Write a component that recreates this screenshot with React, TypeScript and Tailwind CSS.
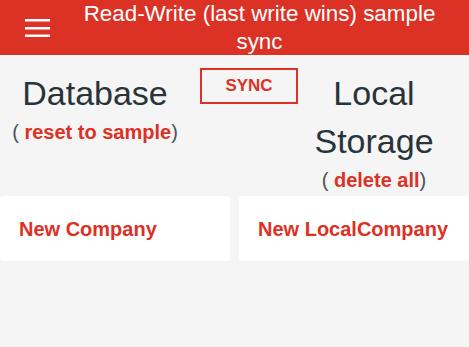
export default function App() {
  return (
    <div className="min-h-[347px] bg-[#f5f5f5] font-['Liberation_Sans',Arial,sans-serif]">
      <header className="h-[55px] bg-[#dc3125] flex items-center">
        <button className="ml-[25px] w-[25px] h-[18px] shrink-0" aria-label="menu">
          <svg width="25" height="18" viewBox="0 0 25 18" className="block">
            <rect x="0" y="0" width="25" height="2.5" fill="#fff" />
            <rect x="0" y="8" width="25" height="2.5" fill="#fff" />
            <rect x="0" y="15.5" width="25" height="2.5" fill="#fff" />
          </svg>
        </button>
        <h1 className="ml-[12px] w-[395px] text-center text-white text-[22.4px] leading-[28px]">
          Read-Write (last write wins) sample sync
        </h1>
      </header>

      <div className="flex items-start">
        <div className="w-[190px] pt-[14px] text-center">
          <div className="text-[34px] leading-[48px] text-[#29343a]">Database</div>
          <div className="text-[20px] leading-[30px] text-[#4a5358]">
            ({" "}
            <a className="font-bold text-[#dc3125]">reset to sample</a>)
          </div>
        </div>
        <button className="ml-[10px] mt-[13px] w-[98px] h-[36px] border-2 border-[#dc3125] text-[#dc3125] font-bold text-[17px]">
          SYNC
        </button>
        <div className="ml-[1px] w-[150px] pt-[14px] text-center">
          <div className="text-[34px] leading-[48px] text-[#29343a]">Local Storage</div>
          <div className="text-[20px] leading-[30px] text-[#4a5358]">
            ({" "}
            <a className="font-bold text-[#dc3125]">delete all</a>)
          </div>
        </div>
      </div>

      <div className="flex gap-[9px] mt-[1px]">
        <div className="flex-1 h-[65px] bg-white rounded-[4px] flex items-center px-[19px]">
          <span className="font-bold text-[20px] text-[#dc3125]">New Company</span>
        </div>
        <div className="flex-1 h-[65px] bg-white rounded-[4px] flex items-center px-[19px]">
          <span className="font-bold text-[20px] text-[#dc3125]">New LocalCompany</span>
        </div>
      </div>
    </div>
  );
}
